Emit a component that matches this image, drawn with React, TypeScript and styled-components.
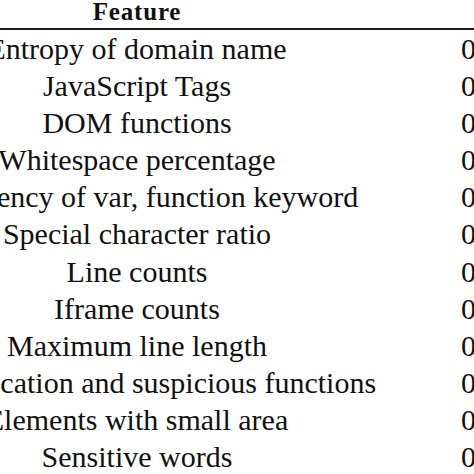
import React from "react";
import styled, { createGlobalStyle } from "styled-components";

const Global = createGlobalStyle`
  html, body { margin: 0; padding: 0; background: #fff; }
  body { width: 474px; height: 474px; overflow: hidden; }
`;

const Frame = styled.div`
  width: 474px;
  height: 474px;
  overflow: hidden;
  background: #fff;
`;

const Table = styled.div`
  display: grid;
  grid-template-columns: 420px 240px;
  margin-left: -73px;
  font-family: "Liberation Serif", "Times New Roman", serif;
  color: #111;
  font-size: 30px;
`;

const HeadCell = styled.div`
  font-weight: bold;
  font-size: 25px;
  letter-spacing: 0.8px;
  text-align: center;
  height: 28px;
  line-height: 24px;
  border-bottom: 2px solid #1a1a1a;
  white-space: nowrap;
`;

const Cell = styled.div<{ $right?: boolean }>`
  text-align: ${(p) => (p.$right ? "left" : "center")};
  padding-left: ${(p) => (p.$right ? "114px" : "0")};
  white-space: nowrap;
  height: 37.1px;
  line-height: 37.1px;
`;

const rows: [string, string][] = [
  ["Entropy of domain name", "0.0821"],
  ["JavaScript Tags", "0.0793"],
  ["DOM functions", "0.0764"],
  ["Whitespace percentage", "0.0731"],
  ["Frequency of var, function keyword", "0.0702"],
  ["Special character ratio", "0.0684"],
  ["Line counts", "0.0653"],
  ["Iframe counts", "0.0611"],
  ["Maximum line length", "0.0587"],
  ["Obfuscation and suspicious functions", "0.0542"],
  ["Elements with small area", "0.0518"],
  ["Sensitive words", "0.0493"],
];

export default function App() {
  return (
    <Frame>
      <Global />
      <Table>
        <HeadCell>Feature</HeadCell>
        <HeadCell />
        {rows.map(([f, v]) => (
          <React.Fragment key={f}>
            <Cell>{f}</Cell>
            <Cell $right>{v}</Cell>
          </React.Fragment>
        ))}
      </Table>
    </Frame>
  );
}
